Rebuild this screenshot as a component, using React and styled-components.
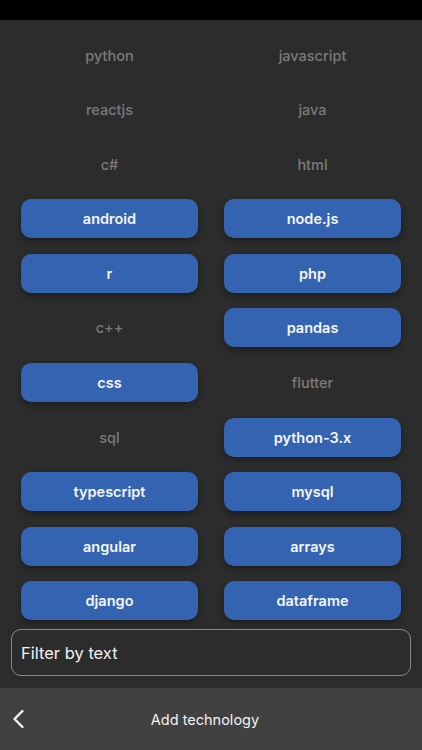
import styled, { createGlobalStyle } from 'styled-components';

const GlobalStyle = createGlobalStyle`
  html, body { margin: 0; padding: 0; background: #2c2c2c; }
  body { font-family: Inter, "Noto Sans", sans-serif; -webkit-font-smoothing: antialiased; }
  * { box-sizing: border-box; }
`;

const Screen = styled.div`
  width: 422px;
  height: 750px;
  display: flex;
  flex-direction: column;
  background: #2c2c2c;
  overflow: hidden;
`;

const StatusBar = styled.div`
  height: 20px;
  flex-shrink: 0;
  background: #000;
`;

const Grid = styled.div`
  display: grid;
  grid-template-columns: 177px 177px;
  grid-auto-rows: 39px;
  column-gap: 26px;
  row-gap: 15.6px;
  padding: 15.5px 21px 0;
`;

const Chip = styled.div`
  display: flex;
  align-items: center;
  justify-content: center;
  border-radius: 10px;
  font-size: 14.5px;
  font-weight: ${p => (p.$on ? 600 : 500)};
  color: ${p => (p.$on ? '#f4f6fb' : '#7b7b7b')};
  background: ${p => (p.$on ? '#3463b1' : 'transparent')};
  box-shadow: ${p => (p.$on ? '0 3px 6px rgba(0,0,0,0.35)' : 'none')};
`;

const FilterBox = styled.div`
  margin: 9px 11px 0;
  height: 47px;
  border: 1px solid #8a8a8a;
  border-radius: 10px;
  display: flex;
  align-items: center;
  padding: 0 9px;
  font-size: 16.5px;
  color: #f2f2f2;
`;

const BottomBar = styled.div`
  margin-top: auto;
  height: 62px;
  background: #414141;
  display: flex;
  align-items: center;
`;

const BackBtn = styled.div`
  width: 40px;
  height: 100%;
  display: flex;
  align-items: center;
  padding-left: 12px;
`;

const Title = styled.div`
  flex: 1;
  text-align: center;
  padding-right: 52px;
  font-size: 14.5px;
  color: #f2f2f2;
`;

const techs = [
  ['python', false], ['javascript', false],
  ['reactjs', false], ['java', false],
  ['c#', false], ['html', false],
  ['android', true], ['node.js', true],
  ['r', true], ['php', true],
  ['c++', false], ['pandas', true],
  ['css', true], ['flutter', false],
  ['sql', false], ['python-3.x', true],
  ['typescript', true], ['mysql', true],
  ['angular', true], ['arrays', true],
  ['django', true], ['dataframe', true],
];

export default function App() {
  return (
    <Screen>
      <GlobalStyle />
      <StatusBar />
      <Grid>
        {techs.map(([name, on]) => (
          <Chip key={name} $on={on}>{name}</Chip>
        ))}
      </Grid>
      <FilterBox>Filter by text</FilterBox>
      <BottomBar>
        <BackBtn>
          <svg width="13" height="20" viewBox="0 0 13 20" fill="none">
            <path d="M10.5 2 L2.5 10 L10.5 18" stroke="#f2f2f2" strokeWidth="2.4" strokeLinecap="round" strokeLinejoin="round" />
          </svg>
        </BackBtn>
        <Title>Add technology</Title>
      </BottomBar>
    </Screen>
  );
}
